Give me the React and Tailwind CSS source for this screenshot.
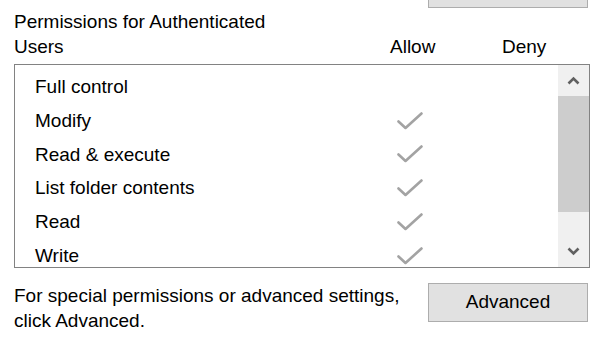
import React from "react";

const rows = [
  { name: "Full control", allow: false },
  { name: "Modify", allow: true },
  { name: "Read & execute", allow: true },
  { name: "List folder contents", allow: true },
  { name: "Read", allow: true },
  { name: "Write", allow: true },
];

function Check() {
  return (
    <svg width="26" height="18" viewBox="0 0 26 18" className="block">
      <polyline
        points="1.5,9.5 8.5,16 24.5,1.5"
        fill="none"
        stroke="#a3a3a3"
        strokeWidth="2.6"
        strokeLinecap="round"
        strokeLinejoin="round"
      />
    </svg>
  );
}

function Chevron({ up }) {
  return (
    <svg width="13" height="9" viewBox="0 0 13 9" className="block">
      <polyline
        points={up ? "1.5,7.5 6.5,2.5 11.5,7.5" : "1.5,1.5 6.5,6.5 11.5,1.5"}
        fill="none"
        stroke="#606060"
        strokeWidth="2.6"
      />
    </svg>
  );
}

export default function App() {
  return (
    <div
      className="w-[606px] h-[354px] bg-white overflow-hidden text-[19px] text-black"
      style={{ fontFamily: '"Liberation Sans", Arial, sans-serif' }}
    >
      <div className="ml-[428px] w-[160px] h-[40px] -mt-[32px] border border-[#adadad] bg-[#e1e1e1]" />
      <div className="flex items-end pl-[14px] pt-[1px] leading-[25px]">
        <div className="w-[376px]">
          Permissions for Authenticated
          <br />
          Users
        </div>
        <div className="w-[112px]">Allow</div>
        <div>Deny</div>
      </div>
      <div className="ml-[14px] mt-[5px] w-[576px] h-[204px] border border-[#828282] flex overflow-hidden">
        <div className="flex-1 pt-[5px] pl-[20px] overflow-hidden">
          {rows.map((r) => (
            <div key={r.name} className="flex items-center h-[33.8px] leading-[33.8px]">
              <div className="w-[362px] whitespace-nowrap">{r.name}</div>
              {r.allow && <Check />}
            </div>
          ))}
        </div>
        <div className="w-[31px] bg-[#f0f0f0] flex flex-col">
          <div className="h-[31px] flex items-center justify-center">
            <Chevron up />
          </div>
          <div className="h-[116px] bg-[#cdcdcd]" />
          <div className="flex-1 flex items-end justify-center pb-[11px]">
            <Chevron />
          </div>
        </div>
      </div>
      <div className="flex mt-[15px]">
        <div className="pl-[14px] w-[428px] leading-[25px]">
          For special permissions or advanced settings,
          <br />
          click Advanced.
        </div>
        <div className="w-[160px] h-[39px] border border-[#adadad] bg-[#e1e1e1] flex items-center justify-center">
          Advanced
        </div>
      </div>
    </div>
  );
}
